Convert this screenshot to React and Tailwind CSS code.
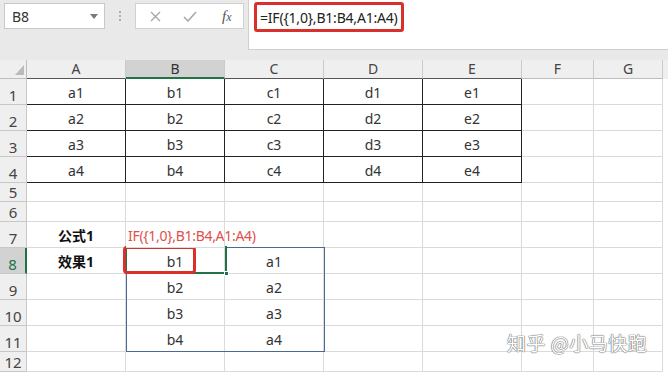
import React from "react";

const COLS = ["A", "B", "C", "D", "E", "F", "G"];
const HEIGHTS = [26, 26, 26, 26, 19, 20, 26, 26, 26, 26, 26, 20];
const DATA = {
  1: ["a1", "b1", "c1", "d1", "e1"],
  2: ["a2", "b2", "c2", "d2", "e2"],
  3: ["a3", "b3", "c3", "d3", "e3"],
  4: ["a4", "b4", "c4", "d4", "e4"],
  8: [null, "b1", "a1"],
  9: [null, "b2", "a2"],
  10: [null, "b3", "a3"],
  11: [null, "b4", "a4"],
};

const FONT = { fontFamily: '"Noto Sans", "Noto Sans CJK SC", sans-serif' };

function Toolbar() {
  return (
    <div className="flex h-[60px] bg-[#e9e9e9]">
      <div className="ml-[4px] mt-[3px] flex h-[26px] w-[101px] items-center justify-between border border-[#c8c8c8] bg-white pl-[7px] pr-[6px]">
        <span className="text-[14px] text-[#333]">B8</span>
        <svg width="8" height="5" viewBox="0 0 8 5">
          <polygon points="0,0 8,0 4,5" fill="#7a7a7a" />
        </svg>
      </div>
      <div className="ml-[14px] mt-[11px] flex flex-col gap-[2px]">
        <div className="h-[2px] w-[2px] bg-[#b0b0b0]" />
        <div className="h-[2px] w-[2px] bg-[#b0b0b0]" />
        <div className="h-[2px] w-[2px] bg-[#b0b0b0]" />
      </div>
      <div className="ml-[14px] mt-[3px] flex h-[26px] w-[109px] items-center border border-[#d0d0d0] bg-white">
        <svg className="ml-[14px]" width="11" height="11" viewBox="0 0 11 11">
          <path d="M1 1 L10 10 M10 1 L1 10" stroke="#a6a6a6" strokeWidth="1.3" fill="none" />
        </svg>
        <svg className="ml-[22px]" width="14" height="11" viewBox="0 0 14 11">
          <path d="M1 6 L5 10 L13 1" stroke="#a6a6a6" strokeWidth="1.5" fill="none" />
        </svg>
        <span
          className="ml-[25px] text-[15px] italic text-[#555]"
          style={{ fontFamily: '"Liberation Serif", serif' }}
        >
          f<span className="text-[12px]">x</span>
        </span>
      </div>
      <div className="ml-[4px] h-[50px] flex-1 border-b border-l border-[#cfcfcf] bg-white pl-[5px] pt-[2px]">
        <div className="flex h-[30px] w-[150px] items-center rounded-[3px] border-[3px] border-[#d9302b] pl-[3px]">
          <span className="text-[14px] tracking-[-0.2px] text-[#222]">=IF({"{"}1,0{"}"},B1:B4,A1:A4)</span>
        </div>
      </div>
    </div>
  );
}

function HeaderRow() {
  return (
    <div className="grid h-[19px] grid-cols-[27px_99px_99px_99px_99px_99px_72px_69px] bg-[#efefef]">
      <div className="relative border-b border-r border-[#bdbdbd]">
        <svg className="absolute bottom-[3px] right-[2px]" width="9" height="10" viewBox="0 0 9 10">
          <polygon points="9,0 9,10 0,10" fill="#bababa" />
        </svg>
      </div>
      {COLS.map((c, i) => {
        const sel = c === "B";
        const bottom = sel
          ? "border-b-2 border-b-[#217346]"
          : i < 5
          ? "border-b border-b-[#555]"
          : "border-b border-b-[#bdbdbd]";
        return (
          <div
            key={c}
            className={`flex items-center justify-center border-r border-r-[#cacaca] text-[14px] leading-none ${bottom} ${
              sel ? "bg-[#d2d2d2] text-[#333]" : "text-[#444]"
            }`}
          >
            {c}
          </div>
        );
      })}
    </div>
  );
}

function Row({ r, h }) {
  const vals = DATA[r] || [];
  const inTable = r >= 1 && r <= 4;
  const sel = r === 8;
  return (
    <div
      className="grid grid-cols-[27px_99px_99px_99px_99px_99px_72px_69px]"
      style={{ height: h }}
    >
      <div
        className={`flex items-end justify-center border-b border-[#c8c8c8] pb-[1px] text-[15px] leading-none ${
          sel
            ? "border-r-2 border-r-[#217346] bg-[#d2d2d2] text-[#217346]"
            : "border-r bg-[#efefef] text-[#444]"
        }`}
      >
        {r}
      </div>
      {COLS.map((c, i) => {
        const black = inTable && i < 5;
        let content = vals[i];
        let extra = "justify-center text-[#333]";
        if (r === 7 && i === 0) {
          content = "公式1";
          extra = "justify-center font-bold text-[#111]";
        } else if (r === 8 && i === 0) {
          content = "效果1";
          extra = "justify-center font-bold text-[#111]";
        } else if (r === 7 && i === 1) {
          content = "IF({1,0},B1:B4,A1:A4)";
          extra = "justify-start pl-[2px] text-[#e0504c] text-[12.5px] tracking-[-0.3px] whitespace-nowrap overflow-visible z-10";
        }
        return (
          <div
            key={c}
            className={`flex items-center pt-[3px] text-[14px] leading-none ${extra} ${
              black
                ? "border-b border-r border-[#222] bg-white"
                : "border-b border-r border-[#dadada] bg-white"
            }`}
          >
            {content}
          </div>
        );
      })}
    </div>
  );
}

export default function App() {
  return (
    <div className="relative h-[372px] w-[668px] overflow-hidden bg-white" style={FONT}>
      <Toolbar />
      <div className="relative">
        <HeaderRow />
        {HEIGHTS.map((h, i) => (
          <Row key={i} r={i + 1} h={h} />
        ))}
      </div>
      {/* array range outline */}
      <div className="pointer-events-none absolute left-[126px] top-[247px] h-[105px] w-[199px] border border-[#4a6a94]" />
      {/* active cell selection */}
      <div className="pointer-events-none absolute left-[125px] top-[246px] h-[28px] w-[102px] border-2 border-[#217346]" />
      <div className="pointer-events-none absolute left-[224px] top-[271px] h-[5px] w-[5px] border border-white bg-[#217346]" />
      {/* red annotation */}
      <div className="pointer-events-none absolute left-[123px] top-[246px] h-[28px] w-[73px] rounded-[4px] border-[3px] border-[#d9302b]" />
      {/* watermark */}
      <div
        className="pointer-events-none absolute left-[507px] top-[329px] whitespace-nowrap text-[19px] tracking-[0.5px] text-white [text-shadow:0_0_1px_#666,0_0_1px_#666,0_0_1px_#888]"
        style={{ fontFamily: '"Noto Sans CJK SC", sans-serif' }}
      >
        知乎 @小马快跑
      </div>
    </div>
  );
}
